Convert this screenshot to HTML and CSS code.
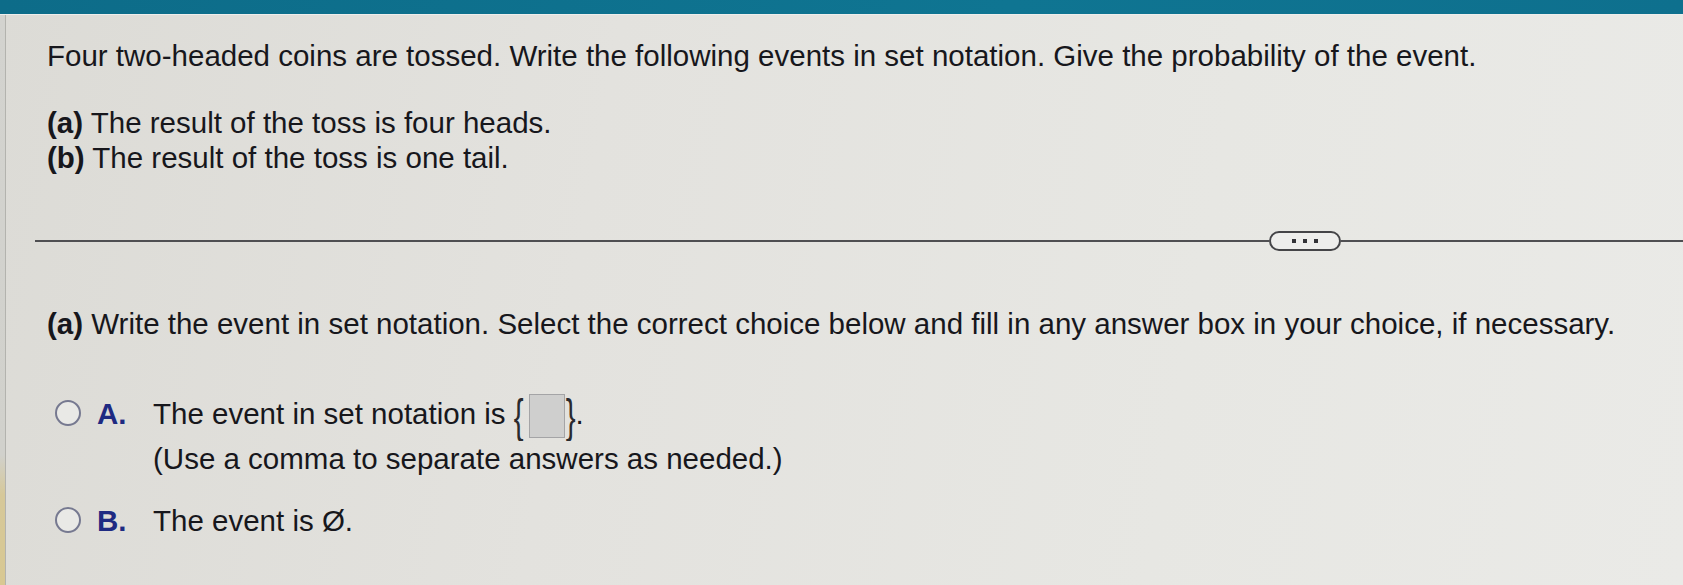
FILE: index.html
```html
<!DOCTYPE html>
<html lang="en">
<head>
<meta charset="utf-8">
<title>Coin toss events</title>
<link rel="stylesheet" href="styles.css">
</head>
<body>
<div class="topbar"></div>
<div class="page">
  <div class="edge"></div>
  <main class="content">
    <p class="intro">Four two-headed coins are tossed. Write the following events in set notation. Give the probability of the event.</p>
    <div class="parts">
      <div class="part"><b>(a)</b> The result of the toss is four heads.</div>
      <div class="part"><b>(b)</b> The result of the toss is one tail.</div>
    </div>
    <div class="divider">
      <span class="rule rule-left"></span>
      <span class="pill"><i class="dot"></i><i class="dot"></i><i class="dot"></i></span>
      <span class="rule rule-right"></span>
    </div>
    <p class="prompt"><b>(a)</b> Write the event in set notation. Select the correct choice below and fill in any answer box in your choice, if necessary.</p>
    <div class="options">
      <div class="option">
        <span class="radio"></span>
        <span class="letter">A.</span>
        <div class="opt-text">
          <div class="line">The event in set notation is <span class="set"><span class="brace">{</span><span class="answer"></span><span class="brace">}</span></span>.</div>
          <div class="line note">(Use a comma to separate answers as needed.)</div>
        </div>
      </div>
      <div class="option option-b">
        <span class="radio"></span>
        <span class="letter">B.</span>
        <div class="opt-text">
          <div class="line">The event is Ø.</div>
        </div>
      </div>
    </div>
  </main>
</div>
</body>
</html>
```

FILE: styles.css
```css
html, body {
  margin: 0;
  padding: 0;
}

body {
  width: 1683px;
  height: 585px;
  overflow: hidden;
  font-family: "Liberation Sans", Arial, sans-serif;
  font-size: 29.5px;
  line-height: 35px;
  color: #17171c;
  background: linear-gradient(100deg, #dcdbd6 0%, #e3e2de 35%, #e7e7e3 70%, #eaeae7 100%);
}

.topbar {
  height: 14px;
  background: linear-gradient(90deg, #0d6c89 0%, #0f7592 60%, #0e708e 100%);
  border-bottom: 1px solid #eeeeec;
}

.page {
  display: flex;
  height: 570px;
}

.edge {
  width: 5px;
  flex: 0 0 5px;
  border-right: 1px solid #b3b3ae;
  background: linear-gradient(180deg, #d3d3cf 0%, #d1d1cc 440px, #d6c899 480px, #d8c892 100%);
}

.content {
  flex: 1;
  padding-left: 41px;
}

.intro {
  margin: 22.5px 0 0;
}

.parts {
  margin-top: 32px;
}

b {
  font-weight: 700;
}

.divider {
  display: flex;
  align-items: center;
  height: 20px;
  margin: 56px 0 0 -12px;
}

.rule {
  height: 2px;
  background: #4f4f52;
}

.rule-left {
  flex: 0 0 1234px;
}

.rule-right {
  flex: 1;
}

.pill {
  display: flex;
  align-items: center;
  justify-content: center;
  gap: 7px;
  width: 72px;
  height: 20px;
  box-sizing: border-box;
  border: 2px solid #454548;
  border-radius: 10px;
  background: #eeeeec;
}

.dot {
  width: 4px;
  height: 4px;
  background: #333338;
}

.prompt {
  margin: 55px 0 0;
}

.options {
  margin-top: 55px;
}

.option {
  display: flex;
  align-items: flex-start;
}

.option-b {
  margin-top: 26.5px;
}

.radio {
  flex: 0 0 26px;
  width: 26px;
  height: 26px;
  box-sizing: border-box;
  margin: 4px 0 0 8px;
  border: 2px solid #767990;
  border-radius: 50%;
  background: #e9e9e6;
}

.letter {
  flex: 0 0 56px;
  margin-left: 16px;
  font-weight: 700;
  color: #1e2a82;
}

.note {
  margin-top: 8.5px;
}

.set {
  display: inline-flex;
  align-items: center;
  vertical-align: middle;
  height: 44px;
  margin: -5px 0;
}

.brace {
  display: inline-block;
  line-height: 1;
  transform: scaleY(1.55);
  color: #2a2a2e;
}

.answer {
  width: 36px;
  height: 44px;
  box-sizing: border-box;
  margin: 0 1px 0 5px;
  border: 1px solid #a4a4a6;
  background: #cfcfce;
}
```
